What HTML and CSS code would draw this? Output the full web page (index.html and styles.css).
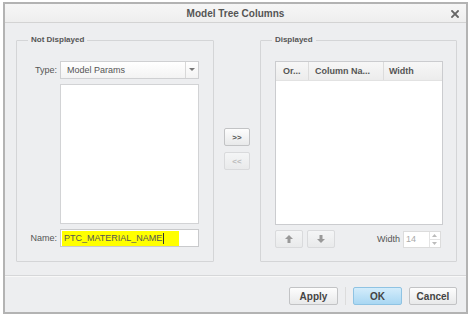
FILE: index.html
```html
<!DOCTYPE html>
<html>
<head>
<meta charset="utf-8">
<link rel="stylesheet" href="styles.css">
</head>
<body>
<div class="dialog">
  <div class="titlebar">
    <span></span>
    <span class="title">Model Tree Columns</span>
    <span class="close">
      <svg width="8" height="8" viewBox="0 0 8 8"><path d="M1 1L7 7M7 1L1 7" stroke="#666" stroke-width="1.8" stroke-linecap="square"/></svg>
    </span>
  </div>
  <div class="main">
    <div class="group group-left">
      <div class="group-title">Not Displayed</div>
      <div class="form">
        <label class="lbl">Type:</label>
        <div class="combo">
          <span class="combo-text">Model Params</span>
          <span class="combo-arrow"><svg width="6" height="4" viewBox="0 0 6 4"><path d="M0 0H6L3 3Z" fill="#777"/></svg></span>
        </div>
        <span></span>
        <div class="listbox"></div>
        <label class="lbl">Name:</label>
        <div class="textfield"><span class="hl">PTC_MATERIAL_NAME<span class="caret"></span></span></div>
      </div>
    </div>
    <div class="middle">
      <button class="btn small">&gt;&gt;</button>
      <button class="btn small disabled">&lt;&lt;</button>
    </div>
    <div class="group group-right">
      <div class="group-title">Displayed</div>
      <div class="table">
        <div class="thead">
          <div class="th c1">Or...</div>
          <div class="th c2">Column Na...</div>
          <div class="th c3">Width</div>
        </div>
      </div>
      <div class="tools">
        <button class="btn icon disabled"><svg width="8" height="8" viewBox="0 0 8 8"><path d="M4 0L8 4H5.5V8H2.5V4H0Z" fill="#999"/></svg></button>
        <button class="btn icon disabled"><svg width="8" height="8" viewBox="0 0 8 8"><path d="M4 8L8 4H5.5V0H2.5V4H0Z" fill="#999"/></svg></button>
        <span class="spacer"></span>
        <span class="wlabel">Width</span>
        <div class="spin">
          <span class="spin-val">14</span>
          <span class="spin-btns">
            <span class="sb"><svg width="5" height="3" viewBox="0 0 5 3"><path d="M0 3H5L2.5 0Z" fill="#bbb"/></svg></span>
            <span class="sb"><svg width="5" height="3" viewBox="0 0 5 3"><path d="M0 0H5L2.5 3Z" fill="#bbb"/></svg></span>
          </span>
        </div>
      </div>
    </div>
  </div>
  <div class="footer">
    <button class="btn fbtn">Apply</button>
    <span class="vsep"></span>
    <button class="btn fbtn ok">OK</button>
    <button class="btn fbtn cancel">Cancel</button>
  </div>
</div>
</body>
</html>
```
FILE: styles.css
```css
html, body {
  margin: 0;
  padding: 0;
  background: #ffffff;
  font-family: "Liberation Sans", Arial, sans-serif;
  color: #555;
}
.dialog {
  margin: 2px 0 0 3px;
  width: 465px;
  height: 312px;
  box-sizing: border-box;
  border: 2px solid #b3b3b3;
  background: #edeef0;
  display: flex;
  flex-direction: column;
}
.titlebar {
  height: 18px;
  border-bottom: 1px solid #d3d3d3;
  background: linear-gradient(#f6f6f6, #eeeeee);
  display: grid;
  grid-template-columns: 1fr auto 1fr;
  align-items: center;
}
.title {
  font-weight: bold;
  font-size: 10px;
  color: #555;
  padding-top: 1px;
}
.close {
  justify-self: end;
  margin-right: 7px;
  display: flex;
  margin-top: 1px;
}
.main {
  display: flex;
  padding: 17px 9px 0 11px;
  height: 222px;
}
.group {
  box-sizing: border-box;
  height: 222px;
  border: 1px solid #d4d5d7;
  border-radius: 1px;
}
.group-left { width: 199px; }
.group-right { width: 198px; }
.group-title {
  display: block;
  width: fit-content;
  margin: -6px 0 0 11px;
  padding: 0 3px;
  background: #edeef0;
  font-size: 8px;
  font-weight: bold;
  color: #555;
  line-height: 10px;
  height: 10px;
}
.form {
  display: grid;
  grid-template-columns: 40px 139px;
  grid-template-rows: 18px 141px 19px;
  column-gap: 3px;
  row-gap: 4px;
  margin-top: 16px;
}
.lbl {
  font-size: 9px;
  text-align: right;
  align-self: center;
  color: #555;
}
.combo {
  box-sizing: border-box;
  border: 1px solid #cfd0d2;
  background: linear-gradient(#ffffff, #f3f3f3);
  display: flex;
  align-items: center;
}
.combo-text {
  flex: 1;
  font-size: 9px;
  padding-left: 6px;
  color: #555;
}
.combo-arrow {
  width: 12px;
  height: 100%;
  border-left: 1px solid #d8d8d8;
  display: flex;
  align-items: center;
  justify-content: center;
}
.listbox {
  box-sizing: border-box;
  border: 1px solid #d2d3d5;
  background: #ffffff;
  margin-top: 1px;
}
.textfield {
  box-sizing: border-box;
  border: 1px solid #c9cacc;
  background: #ffffff;
  display: flex;
  align-items: center;
  padding-left: 1px;
  margin-top: 1px;
}
.hl {
  background: #ffff00;
  font-size: 9px;
  color: #555;
  padding: 2px 15px 2px 2px;
  line-height: 11px;
  display: flex;
  align-items: center;
}
.caret {
  display: inline-block;
  width: 1px;
  height: 11px;
  background: #333;
  margin-left: 1px;
}
.middle {
  width: 46px;
  display: flex;
  flex-direction: column;
  align-items: center;
  padding-top: 88px;
  gap: 6px;
}
.btn {
  box-sizing: border-box;
  font-family: "Liberation Sans", Arial, sans-serif;
  border: 1px solid #c2c3c5;
  border-radius: 2px;
  background: linear-gradient(#fdfdfd, #e8e9ea);
  color: #444;
  padding: 0;
  display: flex;
  align-items: center;
  justify-content: center;
}
.btn.small {
  width: 26px;
  height: 18px;
  font-size: 8px;
  font-weight: bold;
  color: #555;
}
.btn.disabled {
  border-color: #d9dadc;
  background: linear-gradient(#f4f5f6, #e9eaeb);
  color: #bbb;
}
.table {
  box-sizing: border-box;
  margin: 16px 0 0 14px;
  width: 168px;
  height: 164px;
  border: 1px solid #cbcccf;
  background: #ffffff;
}
.thead {
  display: flex;
  height: 18px;
  border-bottom: 1px solid #e2e2e2;
  background: linear-gradient(#f7f7f7, #ececec);
}
.th {
  font-size: 9px;
  font-weight: bold;
  color: #555;
  display: flex;
  align-items: center;
  padding-left: 7px;
  box-sizing: border-box;
}
.c1 { width: 33px; border-right: 1px solid #dcdcdc; }
.c2 { width: 75px; border-right: 1px solid #dcdcdc; padding-left: 6px; }
.c3 { flex: 1; padding-left: 5px; }
.tools {
  display: flex;
  align-items: center;
  margin: 5px 0 0 14px;
  width: 167px;
  height: 18px;
}
.btn.icon {
  width: 28px;
  height: 18px;
  margin-right: 4px;
}
.spacer { flex: 1; }
.wlabel {
  font-size: 9px;
  color: #555;
  margin-right: 3px;
}
.spin {
  box-sizing: border-box;
  width: 38px;
  height: 17px;
  border: 1px solid #dcdcdc;
  background: #ffffff;
  display: flex;
  margin-right: 1px;
}
.spin-val {
  flex: 1;
  font-size: 9px;
  color: #aaa;
  padding-left: 2px;
  display: flex;
  align-items: center;
}
.spin-btns {
  width: 10px;
  display: flex;
  flex-direction: column;
  border-left: 1px solid #e4e4e4;
}
.sb {
  flex: 1;
  display: flex;
  align-items: center;
  justify-content: center;
}
.sb + .sb { border-top: 1px solid #e4e4e4; }
.footer {
  margin-top: 13px;
  border-top: 1px solid #d6d7d9;
  box-shadow: inset 0 1px 0 #f8f8f8;
  flex: 1;
  display: flex;
  justify-content: flex-end;
  align-items: flex-start;
  padding: 11px 9px 0 0;
}
.fbtn {
  height: 18px;
  font-size: 10px;
  font-weight: bold;
  color: #444;
}
.fbtn:first-child { width: 49px; }
.vsep {
  width: 1px;
  height: 18px;
  background: #dcdcdc;
  margin: 0 7px 0 7px;
}
.ok {
  width: 49px;
  border-color: #8fc3e3;
  background: linear-gradient(#d3ecfb, #a9d7f3);
  margin-right: 7px;
}
.cancel { width: 48px; }
```
